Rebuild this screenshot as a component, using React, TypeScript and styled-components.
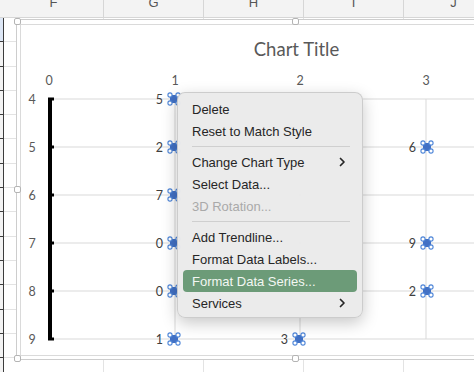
import React from 'react';
import styled, { createGlobalStyle } from 'styled-components';

const GlobalStyle = createGlobalStyle`
  html, body {
    margin: 0;
    padding: 0;
    background: #fff;
  }
  body {
    font-family: 'Liberation Sans', Arial, sans-serif;
    overflow: hidden;
  }
`;

const Page = styled.div`
  position: relative;
  width: 474px;
  height: 372px;
  overflow: hidden;
  background: #fff;
`;

const HeaderRow = styled.div`
  display: flex;
  height: 17px;
  background: #f3f3f3;
  border-bottom: 1px solid #d6d6d6;
`;

const Corner = styled.div`
  flex: none;
  width: 4px;
`;

const ColHeader = styled.div`
  flex: none;
  width: 100px;
  box-sizing: border-box;
  border-right: 1px solid #d6d6d6;
  text-align: center;
  font-size: 13px;
  line-height: 6px;
  color: #555;
  overflow: hidden;
`;

const Grid = styled.div`
  display: grid;
  grid-template-columns: 4px repeat(5, 100px);
  grid-auto-rows: 24.3px;
`;

const Cell = styled.div<{ $head?: boolean; $selected?: boolean }>`
  box-sizing: border-box;
  border-bottom: 1px solid ${(p) => (p.$head ? '#3c3c3c' : '#e3e3e3')};
  border-right: 1px solid ${(p) => (p.$head ? '#3c3c3c' : '#e3e3e3')};
  background: ${(p) => (p.$selected ? '#dde7f6' : p.$head ? '#f3f3f3' : '#fff')};
`;

const ChartObject = styled.div`
  position: absolute;
  left: 16px;
  top: 19px;
  width: 557px;
  height: 341px;
  box-sizing: border-box;
  border: 1px solid #cdcdcd;
  padding: 4px 3px 3px 3px;
  background: #fff;
  display: flex;
`;

const ChartArea = styled.div`
  flex: 1;
  display: flex;
  flex-direction: column;
  border: 1px solid #dadada;
  background: #fff;
`;

const ChartTitle = styled.div`
  padding-top: 13px;
  padding-right: 0;
  text-align: center;
  font-family: Lato, 'Open Sans', sans-serif;
  font-size: 18.5px;
  line-height: 22px;
  color: #595959;
  margin-right: -4px;
`;

const Plot = styled.svg`
  flex: 1;
  width: 100%;
  overflow: visible;
  font-family: Lato, 'Open Sans', sans-serif;
`;

const Handle = styled.div<{ $x: number; $y: number }>`
  position: absolute;
  left: ${(p) => p.$x - 3.5}px;
  top: ${(p) => p.$y - 3.5}px;
  width: 7px;
  height: 7px;
  box-sizing: border-box;
  background: #fff;
  border: 1px solid #b4b4b4;
  border-radius: 2px;
`;

const Menu = styled.div`
  position: absolute;
  left: 177px;
  top: 92px;
  width: 186px;
  box-sizing: border-box;
  padding: 5px 5px 3px;
  background: rgba(234, 234, 234, 0.97);
  border: 1px solid rgba(0, 0, 0, 0.13);
  border-radius: 8px;
  box-shadow: 0 5px 16px rgba(0, 0, 0, 0.22);
  font-family: 'Liberation Sans', Arial, sans-serif;
  font-size: 13px;
  z-index: 2;
`;

const Item = styled.div<{ $active?: boolean; $disabled?: boolean }>`
  display: flex;
  align-items: center;
  justify-content: space-between;
  height: 22px;
  padding: 0 11px 0 9px;
  border-radius: 4px;
  color: ${(p) => (p.$active ? '#f3f7f3' : p.$disabled ? '#a9a9a9' : '#262626')};
  background: ${(p) => (p.$active ? '#6c9b78' : 'transparent')};
  white-space: nowrap;
`;

const Separator = styled.div`
  height: 1px;
  margin: 4px 7px 4px 9px;
  background: #cfcfcf;
`;

const Chevron = () => (
  <svg width="7" height="10" viewBox="0 0 7 10">
    <path d="M1.5 1.5 L5 5 L1.5 8.5" fill="none" stroke="#262626" strokeWidth="1.7" strokeLinecap="round" strokeLinejoin="round" />
  </svg>
);

const ORIGIN_X = 21;
const ORIGIN_Y = 60;

const ROW_Y = [99, 147, 195, 243, 291, 339];
const COL_X = [49, 175, 300, 426];

const points: { x: number; y: number; label: string }[] = [
  { x: 174, y: 99, label: '5' },
  { x: 174, y: 147, label: '2' },
  { x: 174, y: 195, label: '7' },
  { x: 174, y: 243, label: '0' },
  { x: 174, y: 291, label: '0' },
  { x: 174, y: 339, label: '1' },
  { x: 299, y: 339, label: '3' },
  { x: 427, y: 147, label: '6' },
  { x: 427, y: 243, label: '9' },
  { x: 427, y: 291, label: '2' },
];

function Marker({ x, y }: { x: number; y: number }) {
  return (
    <g transform={`translate(${x} ${y})`}>
      <rect x={-4} y={-4} width={8} height={8} fill="#4170c4" />
      {[[-4, -4], [4, -4], [-4, 4], [4, 4]].map(([dx, dy]) => (
        <circle key={`${dx}${dy}`} cx={dx} cy={dy} r={2.1} fill="#fff" stroke="#4f86d8" strokeWidth={1.1} />
      ))}
    </g>
  );
}

function ChartPlot() {
  return (
    <Plot>
      <g transform={`translate(${-ORIGIN_X} ${-ORIGIN_Y})`}>
        {ROW_Y.map((y) => (
          <line key={y} x1={52} x2={600} y1={y} y2={y} stroke="#d9d9d9" strokeWidth={1} />
        ))}
        {COL_X.slice(1).map((x) => (
          <line key={x} x1={x} x2={x} y1={99} y2={339} stroke="#d9d9d9" strokeWidth={1} />
        ))}
        {COL_X.map((x, i) => (
          <text key={x} x={x} y={80} fontSize={12.5} fill="#595959" textAnchor="middle" dominantBaseline="central">
            {i}
          </text>
        ))}
        {ROW_Y.map((y, i) => (
          <text key={y} x={32} y={y} fontSize={12.5} fill="#595959" textAnchor="middle" dominantBaseline="central">
            {i + 4}
          </text>
        ))}
        <rect x={48} y={98} width={4} height={242} fill="#000" />
        {ROW_Y.map((y) => (
          <rect key={y} x={48} y={y - 1.5} width={6} height={3} fill="#000" />
        ))}
        {points.map((p, i) => (
          <g key={i}>
            <text x={p.x - 11} y={p.y} fontSize={12.5} fill="#404040" textAnchor="end" dominantBaseline="central">
              {p.label}
            </text>
            <Marker x={p.x} y={p.y} />
          </g>
        ))}
      </g>
    </Plot>
  );
}

const columns = ['F', 'G', 'H', 'I', 'J'];
const ROWS = 15;

export default function App() {
  return (
    <Page>
      <GlobalStyle />
      <HeaderRow>
        <Corner />
        {columns.map((c) => (
          <ColHeader key={c}>{c}</ColHeader>
        ))}
      </HeaderRow>
      <Grid>
        {Array.from({ length: ROWS }).map((_, r) => (
          <React.Fragment key={r}>
            <Cell $head $selected={r === 0} />
            {columns.map((c) => (
              <Cell key={c} />
            ))}
          </React.Fragment>
        ))}
      </Grid>

      <ChartObject>
        <ChartArea>
          <ChartTitle>Chart Title</ChartTitle>
          <ChartPlot />
        </ChartArea>
      </ChartObject>

      <Handle $x={17.5} $y={21.5} />
      <Handle $x={295} $y={21.5} />
      <Handle $x={17.5} $y={189} />
      <Handle $x={17.5} $y={358} />
      <Handle $x={295} $y={358} />

      <Menu>
        <Item>Delete</Item>
        <Item>Reset to Match Style</Item>
        <Separator />
        <Item>
          Change Chart Type
          <Chevron />
        </Item>
        <Item>Select Data...</Item>
        <Item $disabled>3D Rotation...</Item>
        <Separator />
        <Item>Add Trendline...</Item>
        <Item>Format Data Labels...</Item>
        <Item $active>Format Data Series...</Item>
        <Item>
          Services
          <Chevron />
        </Item>
      </Menu>
    </Page>
  );
}
